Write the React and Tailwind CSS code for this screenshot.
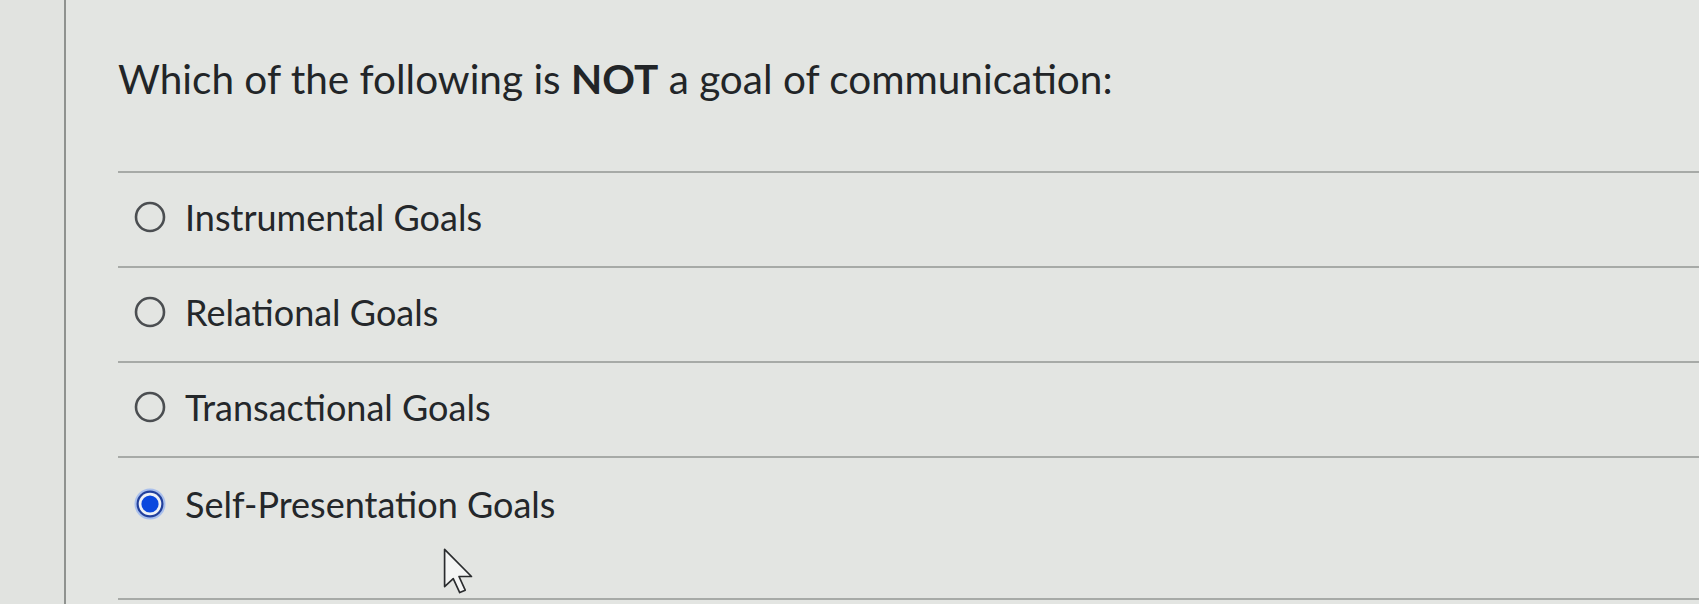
import React from "react";

function Radio({ checked }) {
  if (checked) {
    return (
      <svg width="32" height="32" viewBox="0 0 32 32" className="shrink-0">
        <circle cx="16" cy="16" r="15.5" fill="#a9bfec" />
        <circle cx="16" cy="16" r="13.5" fill="#22409c" />
        <circle cx="16" cy="16" r="11.3" fill="#eef1f6" />
        <circle cx="16" cy="16" r="8.6" fill="#0b48de" />
      </svg>
    );
  }
  return (
    <svg width="32" height="32" viewBox="0 0 32 32" className="shrink-0">
      <circle cx="16" cy="16" r="14" fill="none" stroke="#4b4e51" strokeWidth="2.6" />
    </svg>
  );
}

function Option({ label, checked, last }) {
  return (
    <div className={`flex border-t-[2px] border-[#a7aaa7] ${last ? "h-[142px] items-start pt-[28px]" : "h-[95px] items-center pb-[4px]"}`}>
      <div className="ml-[16px] flex items-center gap-[19px]">
        <Radio checked={checked} />
        <span className="text-[36px] leading-none text-[#24272a]" style={{ fontFamily: "Lato, 'Open Sans', sans-serif" }}>
          {label}
        </span>
      </div>
    </div>
  );
}

export default function App() {
  return (
    <div className="relative flex h-[604px] w-full overflow-hidden bg-[#e3e5e2]" style={{ fontFamily: "Lato, 'Open Sans', sans-serif" }}>
      <div className="w-[66px] shrink-0 border-r-[2px] border-[#8f928f] bg-[#e1e3e0]" />
      <div className="flex flex-1 flex-col pl-[52px]">
        <h1 className="mt-[59px] text-[40.5px] font-normal leading-none text-[#222528]">
          Which of the following is <span className="font-bold">NOT</span> a goal of communication:
        </h1>
        <div className="mt-[71px] flex flex-col">
          <Option label="Instrumental Goals" />
          <Option label="Relational Goals" />
          <Option label="Transactional Goals" />
          <Option label="Self-Presentation Goals" checked last />
          <div className="border-t-[2px] border-[#a7aaa7]" />
        </div>
      </div>
      <svg
        className="absolute left-[442px] top-[547px]"
        width="34"
        height="48"
        viewBox="0 0 14 20"
      >
        <path
          d="M1 1 L1 16.5 L4.6 13.2 L7.3 19 L9.6 18 L7 12.3 L12.2 12.3 Z"
          fill="#f4f5f4"
          stroke="#2a2c2e"
          strokeWidth="0.7"
          strokeLinejoin="round"
        />
      </svg>
    </div>
  );
}
